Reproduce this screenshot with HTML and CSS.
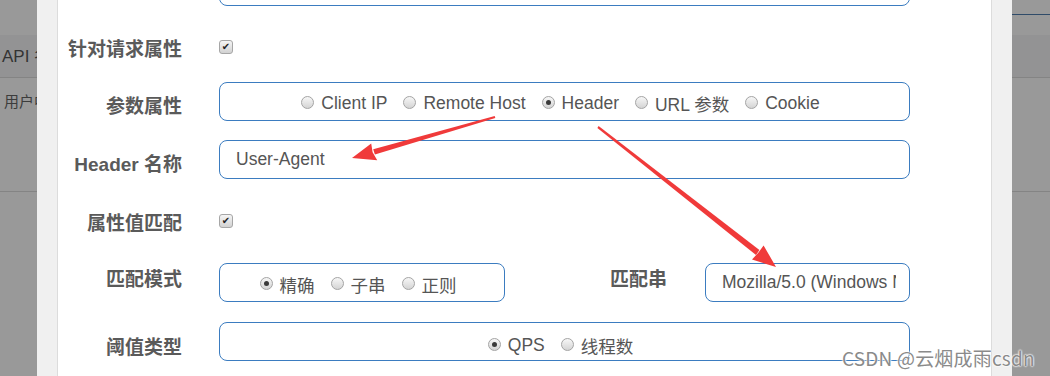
FILE: index.html
```html
<!DOCTYPE html>
<html lang="zh">
<head>
    <meta charset="UTF-8">
    <title>流控规则</title>
    <link rel="stylesheet" href="styles.css">
</head>
<body>

    <!-- Página por trás do modal -->
    <div class="page">
        <div class="topbar"><span class="topbar-item"></span></div>
        <div class="table-head">API 名称</div>
        <div class="table-row">用户中心</div>
    </div>

    <!-- Modal de regra -->
    <div class="modal">
        <div class="modal-body">
            <form class="rule-form">
                <div class="form-group first">
                    <label class="control-label"></label>
                    <div class="field"><input class="text-input" type="text" value=""></div>
                </div>

                <div class="form-group check-row mt-21">
                    <label class="control-label">针对请求属性</label>
                    <div class="field check-field"><input class="check" type="checkbox" checked></div>
                </div>

                <div class="form-group mt-15">
                    <label class="control-label down-2">参数属性</label>
                    <div class="field radio-box">
                        <label class="radio-item"><input type="radio" name="param"> Client IP</label>
                        <label class="radio-item"><input type="radio" name="param"> Remote Host</label>
                        <label class="radio-item"><input type="radio" name="param" checked> Header</label>
                        <label class="radio-item"><input type="radio" name="param"> URL 参数</label>
                        <label class="radio-item"><input type="radio" name="param"> Cookie</label>
                    </div>
                </div>

                <div class="form-group mt-19">
                    <label class="control-label down-2">Header 名称</label>
                    <div class="field"><input class="text-input" type="text" value="User-Agent"></div>
                </div>

                <div class="form-group check-row mt-22">
                    <label class="control-label">属性值匹配</label>
                    <div class="field check-field"><input class="check" type="checkbox" checked></div>
                </div>

                <div class="form-group mt-22">
                    <label class="control-label up-5">匹配模式</label>
                    <div class="field small radio-box">
                        <label class="radio-item"><input type="radio" name="mode" checked> 精确</label>
                        <label class="radio-item"><input type="radio" name="mode"> 子串</label>
                        <label class="radio-item"><input type="radio" name="mode"> 正则</label>
                    </div>
                    <label class="control-label second up-5">匹配串</label>
                    <div class="field tiny"><input class="text-input tight" type="text" value="Mozilla/5.0 (Windows NT 10.0; Win64; x64)"></div>
                </div>

                <div class="form-group mt-20">
                    <label class="control-label down-4">阈值类型</label>
                    <div class="field radio-box low">
                        <label class="radio-item"><input type="radio" name="grade" checked> QPS</label>
                        <label class="radio-item"><input type="radio" name="grade"> 线程数</label>
                    </div>
                </div>
            </form>
        </div>
    </div>

    <!-- Setas vermelhas da captura -->
    <svg class="arrows" width="1050" height="376" viewBox="0 0 1050 376">
        <polygon points="494.7,116.0 495.3,118.0 374.9,154.5 373.2,149.3" fill="#f03a3a"/>
        <polygon points="352,158 371.2,143.6 372.6,152.3 377.2,160.3" fill="#f03a3a"/>
        <polygon points="598.6,126.1 597.4,127.9 756.0,255.0 759.4,250.0" fill="#f03a3a"/>
        <polygon points="776,267 752,259.5 758.3,252.7 763.6,245.4" fill="#f03a3a"/>
    </svg>

    <div class="watermark">CSDN @云烟成雨csdn</div>

</body>
</html>
```

FILE: styles.css
```css
body {
    margin: 0;
    padding: 0;
    width: 1050px;
    height: 376px;
    overflow: hidden;
    position: relative;
    background-color: #999;
    font-family: "Liberation Sans", "Noto Sans CJK SC", sans-serif;
}
.page {
    height: 376px;
}
.topbar {
    height: 15px;
    display: flex;
}
.topbar-item {
    margin-left: auto;
    width: 60px;
    border-bottom: 1px solid #2f4b69;
}
.table-head {
    margin-top: 20px;
    height: 42px;
    line-height: 44px;
    padding-left: 2px;
    background-color: #939394;
    border-bottom: 1px solid #848484;
    color: #333;
    font-size: 17px;
}
.table-row {
    height: 114px;
    padding-left: 4px;
    padding-top: 12px;
    box-sizing: border-box;
    border-bottom: 1px solid #848484;
    color: #3c3c3c;
    font-size: 15px;
}
.modal {
    position: absolute;
    top: 0;
    left: 37px;
    width: 975px;
    height: 376px;
    padding: 0 20px;
    box-sizing: border-box;
    background-color: #f0f0f0;
}
.modal-body {
    height: 100%;
    background-color: #fff;
    border-left: 1px solid #dcdcdc;
    border-right: 1px solid #dcdcdc;
    overflow: hidden;
}
.rule-form {
    margin-top: -33px;
}
.form-group {
    display: flex;
    align-items: center;
    height: 39px;
}
.form-group.check-row {
    height: 40px;
}
.mt-15 { margin-top: 15px; }
.mt-19 { margin-top: 19px; }
.mt-20 { margin-top: 20px; }
.mt-21 { margin-top: 21px; }
.mt-22 { margin-top: 22px; }
.control-label {
    width: 124px;
    flex-shrink: 0;
    text-align: right;
    font-size: 19px;
    font-weight: bold;
    color: #5a5a5a;
    white-space: nowrap;
}
.control-label.second {
    width: 162px;
    margin-right: 38px;
}
.down-2 { padding-top: 5px; }
.down-4 { padding-top: 7px; }
.up-5 { padding-bottom: 11px; }
.field {
    margin-left: 37px;
    width: 691px;
    height: 100%;
    box-sizing: border-box;
}
.check-field {
    display: flex;
    align-items: center;
    padding-bottom: 1px;
}
.control-label.second + .field {
    margin-left: 0;
}
.field.small {
    width: 286px;
}
.field.tiny {
    width: 205px;
}
.text-input {
    width: 100%;
    height: 100%;
    box-sizing: border-box;
    border: 1px solid #3b7cc0;
    border-radius: 8px;
    padding: 0 16px;
    font-family: "Liberation Sans", "Noto Sans CJK SC", sans-serif;
    font-size: 17.5px;
    color: #555;
    outline: none;
}
.text-input.tight {
    padding-right: 13px;
}
.radio-box {
    border: 1px solid #3b7cc0;
    border-radius: 8px;
    display: flex;
    justify-content: center;
    align-items: center;
    gap: 16px;
    padding: 4px 8px 0 0;
}
.radio-box.low {
    padding-top: 7px;
}
.radio-item {
    display: flex;
    align-items: center;
    gap: 7px;
    font-size: 17.5px;
    color: #555;
    white-space: nowrap;
}
.radio-item input {
    appearance: none;
    -webkit-appearance: none;
    margin: 0 0 2px 0;
    width: 13px;
    height: 13px;
    border: 1px solid #a4a4a4;
    border-radius: 50%;
    background: linear-gradient(#f7f7f7, #d4d4d4);
    box-sizing: border-box;
    display: flex;
    align-items: center;
    justify-content: center;
}
.radio-item input:checked::after {
    content: "";
    width: 5px;
    height: 5px;
    border-radius: 50%;
    background-color: #3a3a3a;
}
.check {
    appearance: none;
    -webkit-appearance: none;
    margin: 0;
    width: 14px;
    height: 14px;
    border: 1px solid #a6a6a6;
    border-radius: 3px;
    background: linear-gradient(#f5f5f5, #d2d2d2);
    box-sizing: border-box;
    display: flex;
    align-items: center;
    justify-content: center;
}
.check:checked::after {
    content: "\2714";
    font-family: "DejaVu Sans", sans-serif;
    font-size: 10px;
    line-height: 1;
    color: #222;
}
.arrows {
    position: absolute;
    top: 0;
    left: 0;
}
.watermark {
    position: absolute;
    left: 842px;
    top: 344px;
    font-family: "Noto Sans CJK SC", "Noto Sans", sans-serif;
    font-size: 19px;
    letter-spacing: 0.2px;
    color: #8a8a8a;
    text-shadow: 0 0 2px #fff, 0 0 2px #fff, 0 0 2px #fff;
    white-space: nowrap;
}
```
